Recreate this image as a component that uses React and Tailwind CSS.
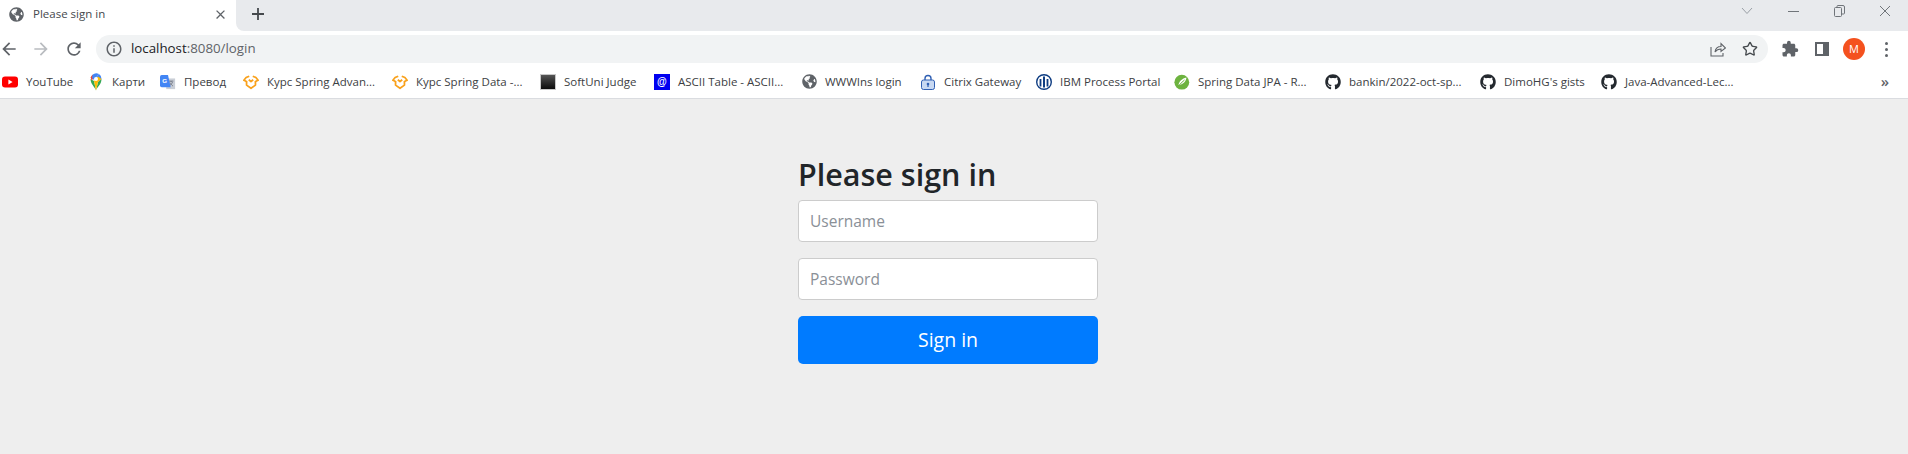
import { FaGithub, FaGlobeAmericas } from "react-icons/fa";
import {
  MdArrowBack,
  MdArrowForward,
  MdClose,
  MdExtension,
  MdInfoOutline,
  MdRefresh,
} from "react-icons/md";
import { Star } from "lucide-react";

function YouTubeIcon() {
  return (
    <svg width="16" height="16" viewBox="0 0 16 16">
      <rect x="0" y="2.5" width="16" height="11" rx="3" fill="#f00" />
      <path d="M6.4 5.6 10.6 8l-4.2 2.4z" fill="#fff" />
    </svg>
  );
}

function MapsIcon() {
  return (
    <svg width="16" height="18" viewBox="0 0 16 18">
      <path d="M8 17.500C7 14 2.500 11 2.500 6L6 8l2 9.500z" fill="#34a853" />
      <path d="M8 17.500c1-3.500 5.500-6 5.500-11.500L10 9z" fill="#34a853" />
      <path d="M2.700 4.500A5.600 5.600 0 0 1 4.500 1.700L7 4 3.500 7.500z" fill="#ea4335" />
      <path d="M4.500 1.700A5.600 5.600 0 0 1 11 1L6 7 4 5z" fill="#4285f4" />
      <path d="M11 1a5.600 5.600 0 0 1 2.500 5L10 9 8.500 4z" fill="#4285f4" />
      <path d="M2.500 6 6 8l4-4.500L13.500 6 10 9l-2 8.500L6 8z" fill="#fbbc04" />
      <circle cx="8" cy="6" r="2" fill="#fff" />
    </svg>
  );
}

function TranslateIcon() {
  return (
    <svg width="18" height="18" viewBox="0 0 18 18">
      <rect x="7" y="5" width="10" height="12" fill="#c9ced6" />
      <path d="M10 8h5M12.500 8v1M14 9c-.6 2-2 3.500-3.500 4.500M11 9.500c.6 1.500 2 3 3.500 4" stroke="#6b7280" strokeWidth="1" fill="none" />
      <path d="M2 1h7l3 14H2a2 2 0 0 1-2-2V3a2 2 0 0 1 2-2z" fill="#4285f4" />
      <text x="2.500" y="10.500" fontSize="7" fontWeight="700" fill="#fff" fontFamily="'Liberation Sans', sans-serif">G</text>
    </svg>
  );
}

function CourseIcon() {
  return (
    <svg width="18" height="16" viewBox="0 0 18 16" fill="none" stroke="#f9a11b" strokeWidth="2" strokeLinejoin="round">
      <path d="M7 1.500 3.500 3 1 6l3 1.500" />
      <path d="M11 1.500 14.500 3 17 6l-3 1.500" />
      <path d="M4 7v4.500L9 15l5-3.500V7" />
      <path d="M6.500 5.500 9 7.500l2.500-2" />
    </svg>
  );
}

function SoftUniIcon() {
  return (
    <div className="w-4 h-4 border border-[#c8c8c8] bg-gradient-to-b from-[#555] to-[#0c0c0c]" />
  );
}

function AsciiIcon() {
  return (
    <div className="w-4 h-4 bg-[#0000f0] flex items-center justify-center text-white text-[10px] font-bold leading-none font-['Liberation_Sans',sans-serif]">
      @
    </div>
  );
}

function CitrixIcon() {
  return (
    <svg width="16" height="16" viewBox="0 0 16 16">
      <path d="M5 7V4.500a3 3 0 0 1 6 0V7" fill="none" stroke="#2f5fb3" strokeWidth="1.400" />
      <rect x="1.500" y="6" width="13" height="9.500" rx="2" fill="#c7d8f2" stroke="#2f5fb3" />
      <circle cx="8" cy="10" r="1.300" fill="#2f5fb3" />
      <rect x="7.400" y="10" width="1.200" height="3" fill="#2f5fb3" />
    </svg>
  );
}

function IbmIcon() {
  return (
    <svg width="16" height="16" viewBox="0 0 16 16">
      <circle cx="8" cy="8" r="7.300" fill="#fff" stroke="#0f3d82" strokeWidth="1.400" />
      <rect x="3.600" y="5" width="1.800" height="7.500" fill="#0f3d82" />
      <rect x="7" y="2.500" width="2" height="11" fill="#0f3d82" />
      <rect x="10.600" y="5" width="1.800" height="7.500" fill="#0f3d82" />
    </svg>
  );
}

function SpringIcon() {
  return (
    <svg width="16" height="16" viewBox="0 0 16 16">
      <circle cx="7.800" cy="8.200" r="7.400" fill="#6db33f" />
      <path d="M12.500 3.500c-.8 4.500-3.500 7-8 7.500.5-3.500 3.500-6.500 8-7.500z" fill="#fff" />
      <path d="M4 12.500c2-2.500 4-4.500 6.500-6.500" stroke="#6db33f" strokeWidth="1" fill="none" />
    </svg>
  );
}

const GlobeIcon = () => <FaGlobeAmericas size={15} className="text-[#5f6368]" />;
const GithubIcon = () => <FaGithub size={16} className="text-[#24292f]" />;

const bookmarks = [
  { label: "YouTube", icon: YouTubeIcon, width: "w-[46px]" },
  { label: "Карти", icon: MapsIcon, width: "w-[32px]" },
  { label: "Превод", icon: TranslateIcon, width: "w-[43px]" },
  { label: "Курс Spring Advan...", icon: CourseIcon, width: "w-[109px]" },
  { label: "Курс Spring Data -...", icon: CourseIcon, width: "w-[108px]" },
  { label: "SoftUni Judge", icon: SoftUniIcon, width: "w-[74px]" },
  { label: "ASCII Table - ASCII...", icon: AsciiIcon, width: "w-[107px]" },
  { label: "WWWIns login", icon: GlobeIcon, width: "w-[79px]" },
  { label: "Citrix Gateway", icon: CitrixIcon, width: "w-[76px]" },
  { label: "IBM Process Portal", icon: IbmIcon, width: "w-[98px]" },
  { label: "Spring Data JPA - R...", icon: SpringIcon, width: "w-[111px]" },
  { label: "bankin/2022-oct-sp...", icon: GithubIcon, width: "w-[115px]" },
  { label: "DimoHG's gists", icon: GithubIcon, width: "w-[81px]" },
  { label: "Java-Advanced-Lec...", icon: GithubIcon, width: "w-[111px]" },
];

function BrowserChrome() {
  return (
    <div className="font-['Open_Sans',sans-serif]">
      {/* Tab strip */}
      <div className="h-[31px] bg-white flex">
        <div className="w-[236px] h-[31px] bg-white flex items-center pl-[9px] pr-[8px] pb-[3px] shrink-0">
          <GlobeIcon />
          <span className="ml-[9px] text-[11.500px] text-[#45494d] flex-1">Please sign in</span>
          <MdClose size={15} className="text-[#5f6368]" />
        </div>
        <div className="flex-1 bg-[#e8eaed] rounded-bl-lg flex items-center">
          <svg className="ml-[15px] mb-[3px]" width="14" height="14" viewBox="0 0 14 14" stroke="#45494d" strokeWidth="1.800">
            <path d="M7 1v12M1 7h12" />
          </svg>
          <div className="ml-auto mr-[17px] mb-[9px] flex items-center">
            <svg width="12" height="8" viewBox="0 0 12 8" fill="none" stroke="#9aa0a6">
              <path d="M1 1l5 5.500L11 1" />
            </svg>
            <div className="ml-[35px] w-[11px] h-px bg-[#70757a]" />
            <svg className="ml-[35px]" width="11" height="12" viewBox="0 0 11 12" fill="none" stroke="#70757a">
              <rect x=".5" y="2.500" width="7" height="9" rx="1" />
              <path d="M3 2V1.500a1 1 0 0 1 1-1h5a1.500 1.500 0 0 1 1.500 1.500v6a1 1 0 0 1-1 1H8" />
            </svg>
            <svg className="ml-[34px]" width="12" height="12" viewBox="0 0 12 12" stroke="#70757a">
              <path d="M1 1l10 10M11 1 1 11" />
            </svg>
          </div>
        </div>
      </div>

      {/* Address bar */}
      <div className="h-[34px] pt-[4px] pb-[2px] bg-white flex items-center">
        <MdArrowBack size={20} className="-ml-[1px] text-[#5f6368]" />
        <MdArrowForward size={20} className="ml-[12px] text-[#b9bcc0]" />
        <MdRefresh size={20} className="ml-[13px] text-[#5f6368]" />
        <div className="ml-[12px] w-[1672px] h-[28px] rounded-full bg-[#f1f3f4] flex items-center pl-[9px] pr-[10px] shrink-0">
          <MdInfoOutline size={18} className="text-[#5f6368]" />
          <span className="ml-[8px] text-[13.300px] text-[#202124]">
            localhost<span className="text-[#5f6368]">:8080/login</span>
          </span>
          <svg className="ml-auto" width="16" height="16" viewBox="0 0 16 16" fill="none" stroke="#5f6368" strokeWidth="1.100">
            <path d="M1 6v9h12v-3M5 11c.5-3.500 3-5.500 6-5.500V2.500L15.500 7 11 10.500V8c-2.500 0-4.500 1-6 3z" />
          </svg>
          <Star size={16} strokeWidth={2} className="ml-[16px] text-[#45494d]" />
        </div>
        <MdExtension size={18} className="ml-[13px] text-[#5f6368]" />
        <div className="ml-[16px] w-[14px] h-[14px] border-[2px] border-r-[6px] border-[#5f6368]" />
        <div className="ml-[14px] w-[22px] h-[22px] rounded-full bg-[#f4511e] text-white text-[11px] flex items-center justify-center">
          M
        </div>
        <div className="ml-[20px] flex flex-col gap-[3px]">
          <div className="w-[3px] h-[3px] rounded-full bg-[#5f6368]" />
          <div className="w-[3px] h-[3px] rounded-full bg-[#5f6368]" />
          <div className="w-[3px] h-[3px] rounded-full bg-[#5f6368]" />
        </div>
      </div>

      {/* Bookmarks */}
      <div className="h-[34px] bg-white border-b border-[#dadce0] flex items-center pl-[2px] pr-[19px]">
        <div className="flex items-center gap-[16px] flex-1">
          {bookmarks.map(({ label, icon: Icon, width }, i) => (
            <div key={i} className="flex items-center gap-[8px] shrink-0">
              <div className="w-4 h-4 flex items-center justify-center">
                <Icon />
              </div>
              <span className={`${width} text-[11.500px] leading-none text-[#3c4043] whitespace-nowrap`}>{label}</span>
            </div>
          ))}
        </div>
        <span className="text-[15px] leading-none font-semibold text-[#5f6368]">»</span>
      </div>
    </div>
  );
}

function LoginForm() {
  return (
    <div className="bg-[#eee] h-[355px] flex justify-center pr-[12px] pt-[57px]">
      <form className="w-[300px] font-['Open_Sans',sans-serif]">
        <h2 className="text-[30.500px] leading-[36px] font-semibold text-[#212529] mb-[8px]">Please sign in</h2>
        <input
          placeholder="Username"
          className="block w-full h-[42px] bg-white border border-[#ccc] rounded-[4px] px-[11px] text-[15.500px] placeholder:text-[#8a9097] mb-[16px]"
        />
        <input
          placeholder="Password"
          className="block w-full h-[42px] bg-white border border-[#ccc] rounded-[4px] px-[11px] text-[15.500px] placeholder:text-[#8a9097] mb-[16px]"
        />
        <button type="button" className="w-full h-[48px] bg-[#007bff] text-white text-[19.500px] rounded-[5px]">
          Sign in
        </button>
      </form>
    </div>
  );
}

export default function App() {
  return (
    <div className="w-[1908px] h-[454px] overflow-hidden">
      <BrowserChrome />
      <LoginForm />
    </div>
  );
}
